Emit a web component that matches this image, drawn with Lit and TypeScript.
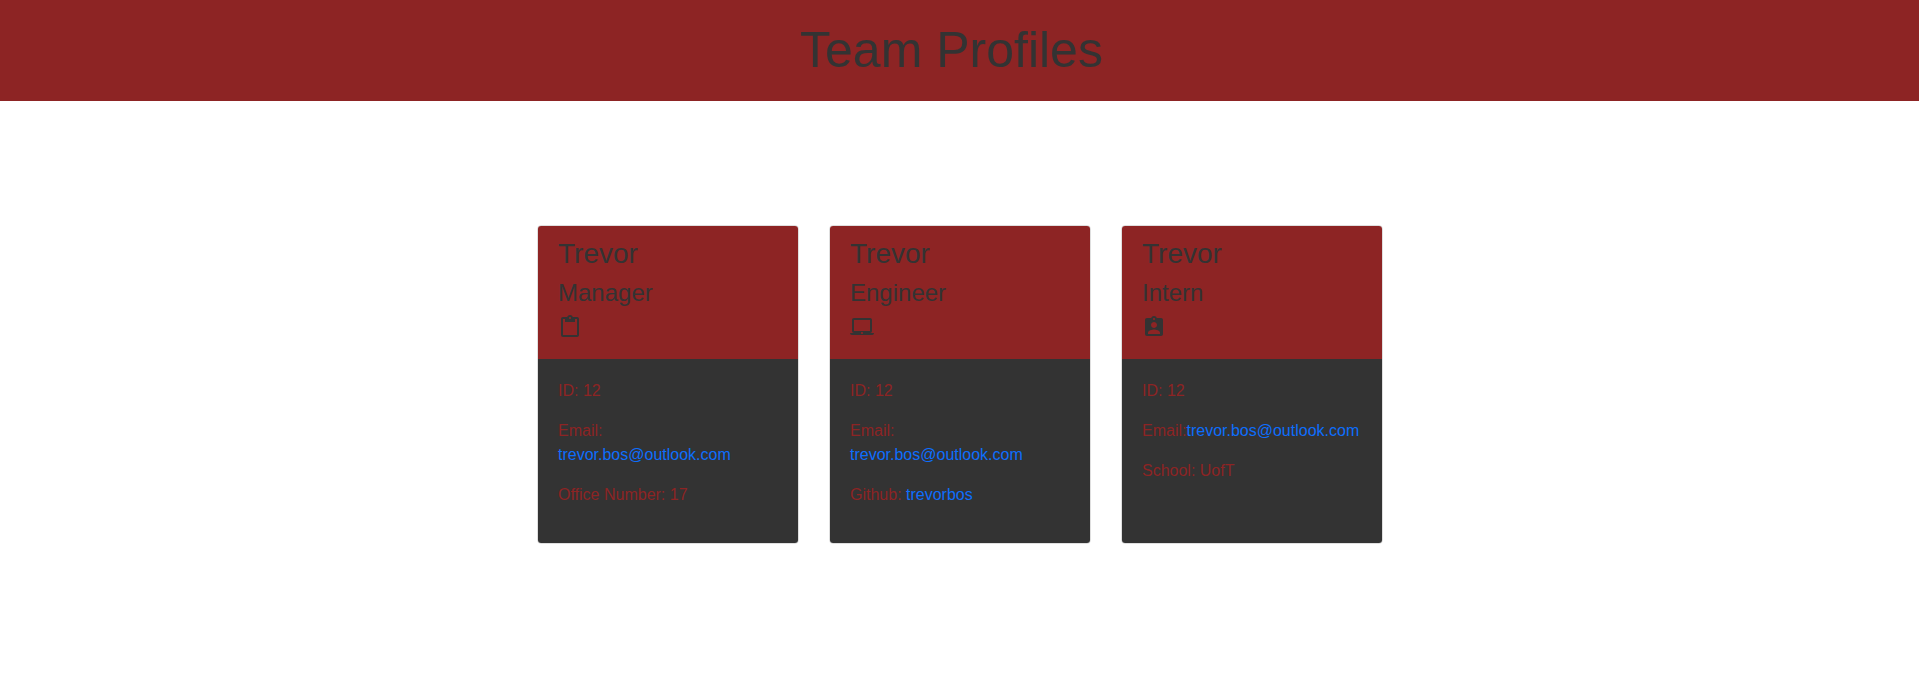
import { LitElement, css, html, svg } from "lit";
import { customElement } from "lit/decorators.js";

const icons = {
  manager: svg`<path d="M19 2h-4.18C14.4.84 13.3 0 12 0c-1.3 0-2.4.84-2.82 2H5c-1.1 0-2 .9-2 2v16c0 1.1.9 2 2 2h14c1.1 0 2-.9 2-2V4c0-1.1-.9-2-2-2zm-7 0c.55 0 1 .45 1 1s-.45 1-1 1-1-.45-1-1 .45-1 1-1zm7 18H5V4h2v3h10V4h2v16z" />`,
  engineer: svg`<path d="M20 18c1.1 0 1.99-.9 1.99-2L22 5c0-1.1-.9-2-2-2H4c-1.1 0-2 .9-2 2v11c0 1.1.9 2 2 2H0c0 1.1.9 2 2 2h20c1.1 0 2-.9 2-2h-4zM4 5h16v11H4V5zm8 14c-.55 0-1-.45-1-1s.45-1 1-1 1 .45 1 1-.45 1-1 1z" />`,
  intern: svg`<path d="M19 3h-4.18C14.4 1.84 13.3 1 12 1c-1.3 0-2.4.84-2.82 2H5c-1.1 0-2 .9-2 2v14c0 1.1.9 2 2 2h14c1.1 0 2-.9 2-2V5c0-1.1-.9-2-2-2zm-7 0c.55 0 1 .45 1 1s-.45 1-1 1-1-.45-1-1 .45-1 1-1zm0 4c1.66 0 3 1.34 3 3s-1.34 3-3 3-3-1.34-3-3 1.34-3 3-3zm6 12H6v-1.4c0-2 4-3.1 6-3.1s6 1.1 6 3.1V19z" />`,
};

@customElement("app-root")
export class AppRoot extends LitElement {
  static styles = css`
    :host {
      display: block;
      font-family: "Liberation Sans", Arial, sans-serif;
      font-size: 16px;
      line-height: 24px;
      color: #333;
    }
    .banner {
      height: 101px;
      box-sizing: border-box;
      padding-bottom: 2px;
      display: flex;
      align-items: center;
      justify-content: center;
      background: #8d2424;
    }
    h1 {
      margin: 0;
      padding-right: 16px;
      font-size: 50px;
      font-weight: 400;
      line-height: 1.2;
    }
    .team {
      display: flex;
      justify-content: center;
      gap: 30px;
      padding-top: 124px;
    }
    .card {
      width: 262px;
      height: 319px;
      box-sizing: border-box;
      display: flex;
      flex-direction: column;
      border: 1px solid rgba(0, 0, 0, 0.125);
      border-radius: 4px;
      overflow: hidden;
    }
    .card-head {
      height: 133px;
      flex: none;
      box-sizing: border-box;
      padding: 11px 20px 0 20.5px;
      background: #8d2424;
    }
    h2,
    h3 {
      margin: 0 0 8px;
      font-weight: 400;
      line-height: 1.2;
    }
    h2 {
      font-size: 28px;
    }
    h3 {
      font-size: 24px;
    }
    svg {
      display: block;
      width: 24px;
      height: 24px;
      fill: #333;
    }
    .card-body {
      flex: 1;
      padding: 20px 20px 20px 20.5px;
      color: #8d2424;
      background: #333;
    }
    p {
      margin: 0 0 16px;
    }
    a {
      color: #0d6efd;
      text-decoration: none;
    }
    .own-line {
      display: block;
    }
  `;

  private person(role: string, icon: unknown, last: unknown, wrapEmail: boolean) {
    return html`
      <article class="card">
        <div class="card-head">
          <h2>Trevor</h2>
          <h3>${role}</h3>
          <svg viewBox="0 0 24 24">${icon}</svg>
        </div>
        <div class="card-body">
          <p>ID: 12</p>
          <p>
            Email:<a class=${wrapEmail ? "own-line" : ""} href="#">trevor.bos@outlook.com</a>
          </p>
          <p>${last}</p>
        </div>
      </article>
    `;
  }

  render() {
    return html`
      <header class="banner"><h1>Team Profiles</h1></header>
      <main class="team">
        ${this.person("Manager", icons.manager, "Office Number: 17", true)}
        ${this.person(
          "Engineer",
          icons.engineer,
          html`Github: <a href="#">trevorbos</a>`,
          true
        )}
        ${this.person("Intern", icons.intern, "School: UofT", false)}
      </main>
    `;
  }
}
